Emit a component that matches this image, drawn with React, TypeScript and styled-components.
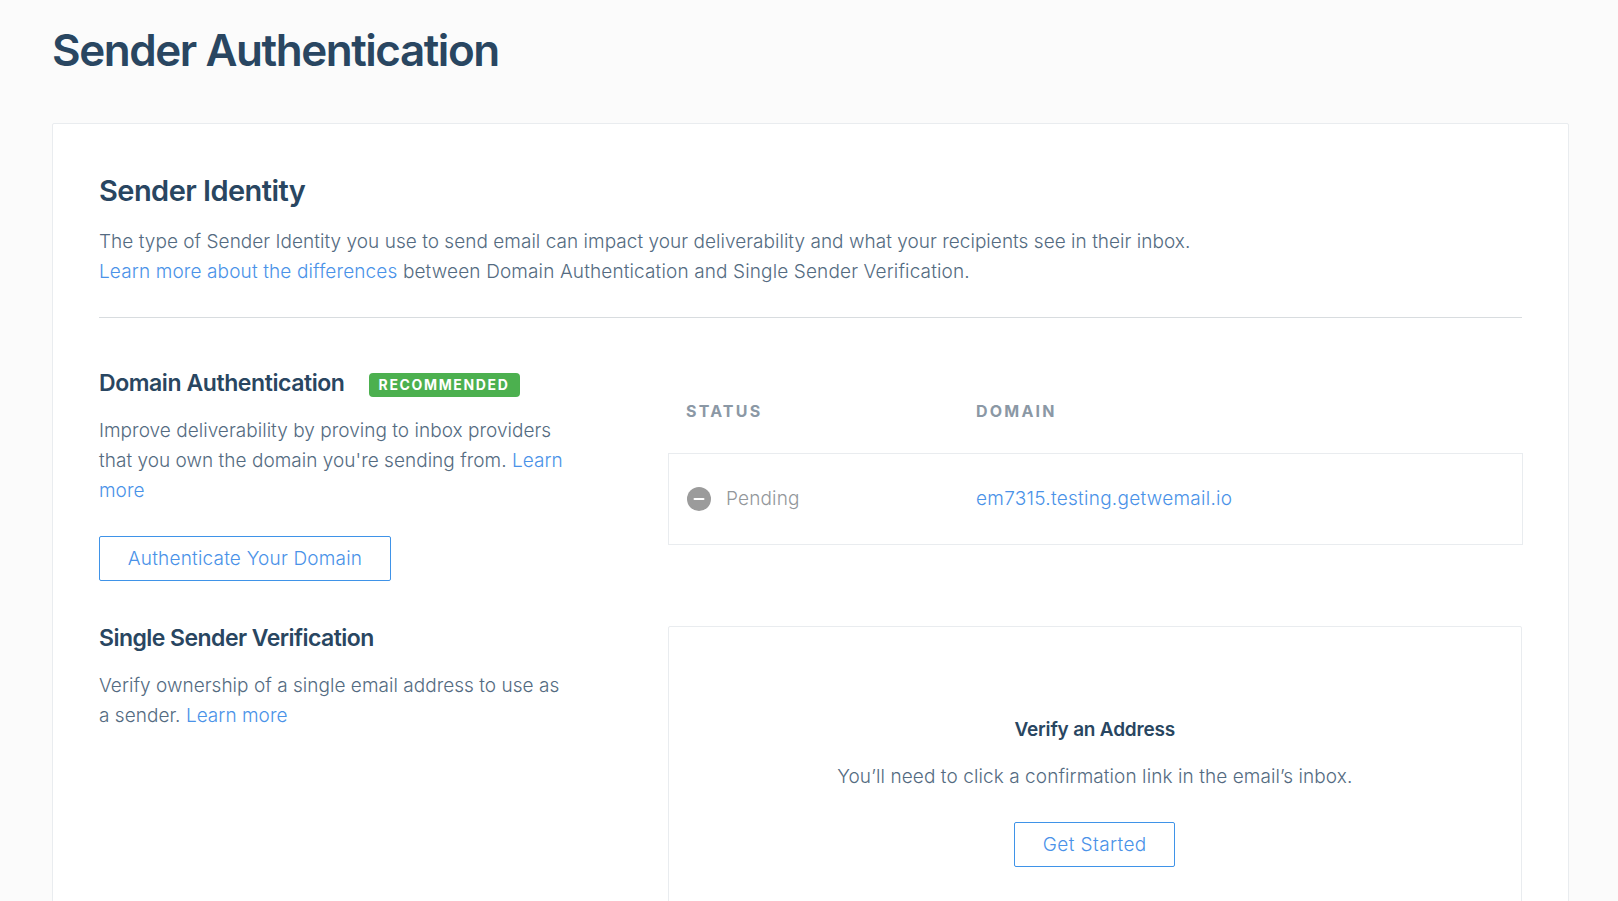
import React from "react";
import styled, { createGlobalStyle } from "styled-components";

const Global = createGlobalStyle`
  html, body { margin: 0; padding: 0; height: 901px; overflow: hidden; background: #fbfbfb; }
  body { font-family: Inter, Roboto, "Liberation Sans", sans-serif; color: #546b81; -webkit-font-smoothing: antialiased; }
  a { color: #4a92e8; text-decoration: none; }
`;

const Page = styled.main`
  box-sizing: border-box;
  padding: 22px 49.5px 0 52px;
`;
const Title = styled.h1`
  margin: 0 0 45px;
  font-size: 44px;
  line-height: 56px;
  font-weight: 600;
  color: #294661;
  letter-spacing: -1.45px;
`;
const Card = styled.section`
  box-sizing: border-box;
  background: #fff;
  border: 1px solid #e9ecef;
  border-radius: 2px;
  padding: 45px 46px 60px;
  height: 900px;
`;
const Heading = styled.h2`
  margin: 0 0 14px;
  font-size: 29px;
  line-height: 44px;
  font-weight: 600;
  color: #294661;
  letter-spacing: -0.55px;
`;
const Body = styled.p`
  margin: 0;
  font-size: 19px;
  line-height: 30px;
  font-weight: 300;
  letter-spacing: 0.03px;
  color: #546b81;
`;
const WideLine = styled.span`
  letter-spacing: 0.13px;
`;
const Divider = styled.hr`
  border: 0;
  border-top: 1px solid #d8dcdf;
  margin: 30px 0 0;
`;
const Grid = styled.div`
  display: grid;
  grid-template-columns: 569px 1fr;
  grid-template-rows: 255px auto;
  padding-top: 52px;
`;
const Left = styled.div`
  width: 468px;
`;
const TitleRow = styled.div`
  display: flex;
  align-items: center;
  gap: 24px;
  margin-bottom: 20px;
  height: 26px;
`;
const SubHeading = styled.h3`
  margin: 0;
  font-size: 23px;
  line-height: 26px;
  font-weight: 600;
  color: #294661;
  letter-spacing: -0.42px;
  white-space: nowrap;
`;
const SpacedSub = styled(SubHeading)`
  margin-bottom: 20px;
  letter-spacing: -0.54px;
`;
const Badge = styled.span`
  box-sizing: border-box;
  width: 151px;
  height: 24px;
  margin-top: 3px;
  display: flex;
  align-items: center;
  justify-content: center;
  background: #4cb04f;
  border-radius: 4px;
  color: #fff;
  font-size: 14px;
  font-weight: 700;
  letter-spacing: 1.65px;
`;
const Outline = styled.a<{ $w: number }>`
  box-sizing: border-box;
  display: inline-flex;
  align-items: center;
  justify-content: center;
  width: ${(p) => p.$w}px;
  height: 45px;
  border: 1px solid #3f93e8;
  border-radius: 2px;
  font-size: 19px;
  font-weight: 300;
  letter-spacing: 0.2px;
  background: #fff;
`;
const AuthButton = styled(Outline)`
  margin-top: 30px;
  padding-bottom: 1px;
`;
const Cols = styled.div`
  display: grid;
  grid-template-columns: 290px 1fr;
  padding-left: 18px;
`;
const ColHead = styled.div`
  font-size: 16px;
  line-height: 20px;
  font-weight: 700;
  letter-spacing: 2.2px;
  color: #8b98a5;
`;
const HeadRow = styled(Cols)`
  margin-top: 31px;
  margin-bottom: 32px;
`;
const StatusBox = styled(Cols)`
  box-sizing: border-box;
  height: 92px;
  align-items: center;
  border: 1px solid #e9ecef;
  margin-right: -1px;
`;
const Status = styled.div`
  display: flex;
  align-items: center;
  gap: 15px;
  font-size: 19px;
  line-height: 24px;
  font-weight: 300;
  letter-spacing: 0.15px;
  color: #93979b;
`;
const StatusLabel = styled.span`
  margin-top: -1px;
`;
const DomainLink = styled.a`
  font-size: 19px;
  line-height: 30px;
  font-weight: 300;
  letter-spacing: 0.27px;
  margin-left: -1px;
`;
const Verify = styled.div`
  box-sizing: border-box;
  height: 400px;
  margin-top: 1px;
  border: 1px solid #e9ecef;
  border-radius: 2px;
  display: flex;
  flex-direction: column;
  align-items: center;
  padding-top: 91px;
`;
const VerifyTitle = styled.div`
  font-size: 19px;
  line-height: 24px;
  font-weight: 600;
  color: #294661;
  letter-spacing: -0.2px;
  margin-bottom: 20px;
`;
const VerifyText = styled(Body)`
  letter-spacing: 0.08px;
`;
const VerifyButton = styled(Outline)`
  margin-top: 30px;
  letter-spacing: 0.4px;
`;

const PendingIcon = () => (
  <svg width="24" height="24" viewBox="0 0 24 24" aria-hidden="true">
    <circle cx="12" cy="12" r="12" fill="#9b9b9b" />
    <rect x="6.5" y="11" width="11" height="2" rx="1" fill="#fff" />
  </svg>
);

export default function App() {
  return (
    <>
      <Global />
      <Page>
        <Title>Sender Authentication</Title>
        <Card>
          <Heading>Sender Identity</Heading>
          <Body>
            The type of Sender Identity you use to send email can impact your deliverability and what your recipients see in their inbox.
            <br />
            <WideLine>
              <a href="#">Learn more about the differences</a> between Domain Authentication and Single Sender Verification.
            </WideLine>
          </Body>
          <Divider />
          <Grid>
            <Left>
              <TitleRow>
                <SubHeading>Domain Authentication</SubHeading>
                <Badge>RECOMMENDED</Badge>
              </TitleRow>
              <Body>
                Improve deliverability by proving to inbox providers that you own the domain you're sending from. <a href="#">Learn more</a>
              </Body>
              <AuthButton href="#" $w={292}>Authenticate Your Domain</AuthButton>
            </Left>
            <div>
              <HeadRow>
                <ColHead>STATUS</ColHead>
                <ColHead>DOMAIN</ColHead>
              </HeadRow>
              <StatusBox>
                <Status><PendingIcon /><StatusLabel>Pending</StatusLabel></Status>
                <div><DomainLink href="#">em7315.testing.getwemail.io</DomainLink></div>
              </StatusBox>
            </div>
            <Left>
              <SpacedSub>Single Sender Verification</SpacedSub>
              <Body>
                Verify ownership of a single email address to use as a sender. <a href="#">Learn more</a>
              </Body>
            </Left>
            <Verify>
              <VerifyTitle>Verify an Address</VerifyTitle>
              <VerifyText>You’ll need to click a confirmation link in the email’s inbox.</VerifyText>
              <VerifyButton href="#" $w={161}>Get Started</VerifyButton>
            </Verify>
          </Grid>
        </Card>
      </Page>
    </>
  );
}
